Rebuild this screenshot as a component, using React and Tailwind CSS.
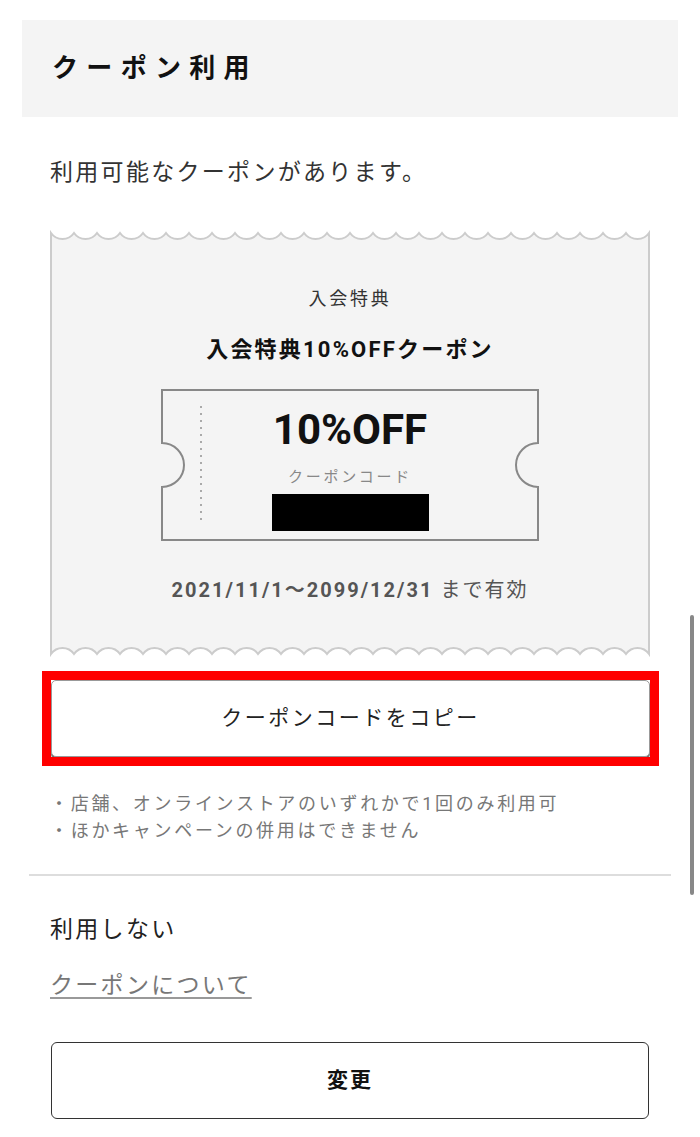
const arcs = (y, r, sweep) => {
  const n = 26
  const step = 598 / n
  let d = ""
  for (let i = 1; i <= n; i++) {
    d += ` A${r} ${r} 0 0 ${sweep} ${(1 + step * i).toFixed(2)} ${y}`
  }
  return d
}

const ScallopTop = () => (
  <svg width="600" height="12" viewBox="0 0 600 12" className="block">
    <path d={`M1 12 V3${arcs(3, 14, 0)} V12`} fill="#f4f4f4" stroke="#cccccc" strokeWidth="2" />
  </svg>
)

const ScallopBottom = () => (
  <svg width="600" height="12" viewBox="0 0 600 12" className="block">
    <path d={`M1 0 V9${arcs(9, 14, 1)} V0`} fill="#f4f4f4" stroke="#cccccc" strokeWidth="2" />
  </svg>
)

const Ticket = () => (
  <div className="relative mx-auto mt-[24px] h-[152px] w-[378px]">
    <svg width="378" height="152" viewBox="0 0 378 152" className="absolute inset-0">
      <path
        d="M1 1 H377 V54 A22 22 0 0 0 377 98 V151 H1 V98 A22 22 0 0 0 1 54 Z"
        fill="none"
        stroke="#888888"
        strokeWidth="2"
      />
      <line x1="40" y1="17" x2="40" y2="132" stroke="#aaaaaa" strokeWidth="2" strokeDasharray="2 5" />
    </svg>
    <div className="relative flex flex-col items-center pt-[18px]">
      <p className="text-[42px] font-bold leading-[46px] text-[#111]">10%OFF</p>
      <p className="mt-[14px] text-[15px] leading-[20px] tracking-[0.18em] text-[#888]">クーポンコード</p>
      <div className="mt-[7px] h-[37px] w-[157px] bg-black" />
    </div>
  </div>
)

export default function App() {
  return (
    <div
      className="relative min-h-[1137px] bg-white pt-[20px] pb-[18px]"
      style={{ fontFamily: 'Roboto, "Noto Sans CJK JP", sans-serif' }}
    >
      <div className="mx-[22px] flex h-[97px] items-center bg-[#f4f4f4] pl-[30px]">
        <h1 className="text-[26px] font-bold tracking-[0.32em] text-[#111]">クーポン利用</h1>
      </div>

      <div className="px-[50px]">
        <p className="mt-[41px] text-[23px] leading-[30px] tracking-[0.1em] text-[#333]">
          利用可能なクーポンがあります。
        </p>

        <div className="mt-[42px] w-[600px]">
          <ScallopTop />
          <div className="border-x-2 border-[#cccccc] bg-[#f4f4f4] pt-[45px] pb-[41px] text-center">
            <p className="text-[18px] leading-[24px] tracking-[0.15em] text-[#333]">入会特典</p>
            <p className="mt-[24px] text-[22px] font-bold leading-[30px] tracking-[0.1em] text-[#111]">
              入会特典10%OFFクーポン
            </p>
            <Ticket />
            <p className="mt-[35px] text-[20px] leading-[28px] tracking-[0.1em] text-[#555]">
              <span className="font-bold">2021/11/1〜2099/12/31</span> まで有効
            </p>
          </div>
          <ScallopBottom />
        </div>

        <div className="relative mt-[23px] ml-px">
          <button className="flex h-[77px] w-[599px] items-center justify-center rounded-[5px] border border-[#999] bg-white text-[21px] tracking-[0.12em] text-[#222] shadow-[0_2px_1px_rgba(0,0,0,0.6)]">
            クーポンコードをコピー
          </button>
          <span className="pointer-events-none absolute -inset-[9px] border-[9px] border-[#ff0000]" />
        </div>

        <ul className="mt-[33px] text-[18px] leading-[27px] tracking-[0.15em] text-[#777]">
          <li>・店舗、オンラインストアのいずれかで1回のみ利用可</li>
          <li>・ほかキャンペーンの併用はできません</li>
        </ul>

        <div className="-mx-[21px] mt-[30px] h-[2px] bg-[#dddddd]" />

        <p className="mt-[39px] text-[23px] leading-[30px] tracking-[0.1em] text-[#222]">利用しない</p>
        <p className="mt-[26px] text-[23px] leading-[30px] tracking-[0.1em]">
          <a className="text-[#777] underline decoration-[#999] underline-offset-[4px]">クーポンについて</a>
        </p>

        <button className="mt-[41px] ml-px flex h-[77px] w-[598px] items-center justify-center rounded-[6px] border-[1.5px] border-[#333] bg-white text-[21px] font-bold tracking-[0.1em] text-[#111]">
          変更
        </button>
      </div>

      <div className="absolute top-[615px] right-[6px] h-[280px] w-[4px] rounded-full bg-[#888]" />
    </div>
  )
}
